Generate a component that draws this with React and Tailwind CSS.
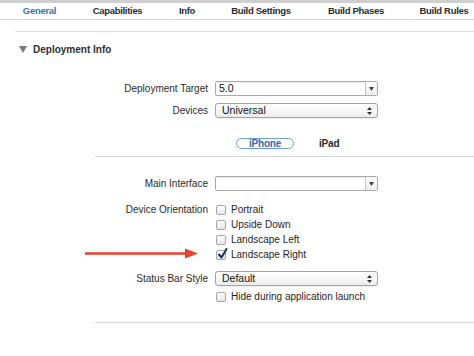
const tabs = [
  { name: "General", box: "w-[71px] ml-[4px]" },
  { name: "Capabilities", box: "w-[85px]" },
  { name: "Info", box: "w-[54px]" },
  { name: "Build Settings", box: "w-[94px]" },
  { name: "Build Phases", box: "w-[96px]" },
  { name: "Build Rules", box: "w-[80px]" },
];

const orientations = [
  { label: "Portrait", checked: false },
  { label: "Upside Down", checked: false },
  { label: "Landscape Left", checked: false },
  { label: "Landscape Right", checked: true },
];

function Checkbox({ checked }) {
  return (
    <span className="relative w-[10px] h-[10px] rounded-[2px] border border-[#a5a5a5] bg-gradient-to-b from-white to-[#e8e8e8] shrink-0">
      {checked && (
        <svg className="absolute -top-[3px] left-0" width="11" height="12" viewBox="0 0 11 12">
          <path d="M2 6.5 L4.5 9.5 L9.5 1" fill="none" stroke="#1d2f5a" strokeWidth="2" strokeLinecap="round" strokeLinejoin="round" />
        </svg>
      )}
    </span>
  );
}

function ComboField({ value }) {
  return (
    <div className="w-[163px] h-[15px] flex border border-[#a9a9a9] rounded-[2px] bg-white shadow-[inset_0_1px_1px_rgba(0,0,0,0.08)]">
      <div className="flex-1 pl-[3px] text-[10.5px] leading-[13px] text-[#111]">{value}</div>
      <div className="w-[12px] border-l border-[#c4c4c4] bg-gradient-to-b from-white to-[#ececec] flex items-center justify-center">
        <svg width="5" height="4" viewBox="0 0 5 4">
          <path d="M0 0 H5 L2.5 4 Z" fill="#444" />
        </svg>
      </div>
    </div>
  );
}

function PopupField({ value }) {
  return (
    <div className="w-[163px] h-[15px] flex items-center border border-[#a4a4a4] rounded-[3px] bg-gradient-to-b from-white to-[#ededed] shadow-[0_1px_0_rgba(0,0,0,0.06)]">
      <div className="flex-1 pl-[6px] text-[10.5px] leading-[13px] text-[#111]">{value}</div>
      <svg className="mr-[5px]" width="5" height="8" viewBox="0 0 5 8">
        <path d="M0 3 L2.5 0 L5 3 Z M0 5 L2.5 8 L5 5 Z" fill="#333" />
      </svg>
    </div>
  );
}

function Row({ label, children, className = "" }) {
  return (
    <div className={`flex items-center ${className}`}>
      <div className="w-[208px] text-right text-[10px] leading-[15px] text-[#2a2a2a]">{label}</div>
      <div className="ml-[7px]">{children}</div>
    </div>
  );
}

export default function App() {
  return (
    <div
      className="w-[474px] h-[356px] bg-white overflow-hidden relative"
      style={{ fontFamily: '"Liberation Sans", Arial, sans-serif' }}
    >
      <div className="h-[3px] bg-[#cfcfcf]" />
      <div className="h-[17px] flex items-center border-b border-[#d6d6d6] text-[9.5px] font-bold tracking-[-0.3px] text-[#2b2b2b] whitespace-nowrap">
        {tabs.map((tab) => (
          <span
            key={tab.name}
            className={`${tab.box} shrink-0 text-center ${tab.name === "General" ? "text-[#3c73b6]" : ""}`}
          >
            {tab.name}
          </span>
        ))}
      </div>

      <div className="mt-[11px] ml-[15px] border-t border-[#dcdcdc]" />

      <div className="mt-[10px] pl-[19px] flex items-center gap-[6px] text-[10px] font-bold text-[#2e2e2e]">
        <svg width="8" height="7" viewBox="0 0 8 7">
          <path d="M0 0 H8 L4 7 Z" fill="#7a7a7a" />
        </svg>
        <span>Deployment Info</span>
      </div>

      <Row label="Deployment Target" className="mt-[24px]">
        <ComboField value="5.0" />
      </Row>
      <Row label="Devices" className="mt-[7px]">
        <PopupField value="Universal" />
      </Row>

      <div className="mt-[19px] h-[12px] flex items-center text-[10px] font-bold tracking-[-0.2px]">
        <span className="ml-[236px] w-[58px] h-[11px] flex items-center justify-center rounded-full border border-[#6f9fd8] text-[#3567a8] bg-white">
          iPhone
        </span>
        <span className="ml-[25px] text-[#2a2a2a]">iPad</span>
      </div>

      <div className="mt-[7px] ml-[95px] border-t border-[#d8d8d8]" />

      <Row label="Main Interface" className="mt-[19px]">
        <ComboField value="" />
      </Row>

      <div className="mt-[11px] flex">
        <div className="w-[208px] text-right text-[10px] text-[#2a2a2a] leading-[15px]">Device Orientation</div>
        <div className="ml-[8px] flex flex-col">
          {orientations.map((o) => (
            <label key={o.label} className="relative h-[15px] flex items-center gap-[5px] text-[10px] text-[#1e1e1e]">
              <Checkbox checked={o.checked} />
              <span>{o.label}</span>
              {o.checked && (
                <svg className="absolute left-[-131px] top-[1px]" width="113" height="11" viewBox="0 0 113 11">
                  <path d="M0 5.5 H102" stroke="#e8412f" strokeWidth="2.5" />
                  <path d="M100 0.5 L113 5.5 L100 10.5 Z" fill="#e8412f" />
                </svg>
              )}
            </label>
          ))}
        </div>
      </div>

      <Row label="Status Bar Style" className="mt-[9px]">
        <PopupField value="Default" />
      </Row>
      <div className="mt-[3px] ml-[216px] h-[15px] flex items-center gap-[5px] text-[10px] text-[#1e1e1e]">
        <Checkbox checked={false} />
        <span>Hide during application launch</span>
      </div>

      <div className="mt-[18px] ml-[95px] border-t border-[#d8d8d8]" />
    </div>
  );
}
